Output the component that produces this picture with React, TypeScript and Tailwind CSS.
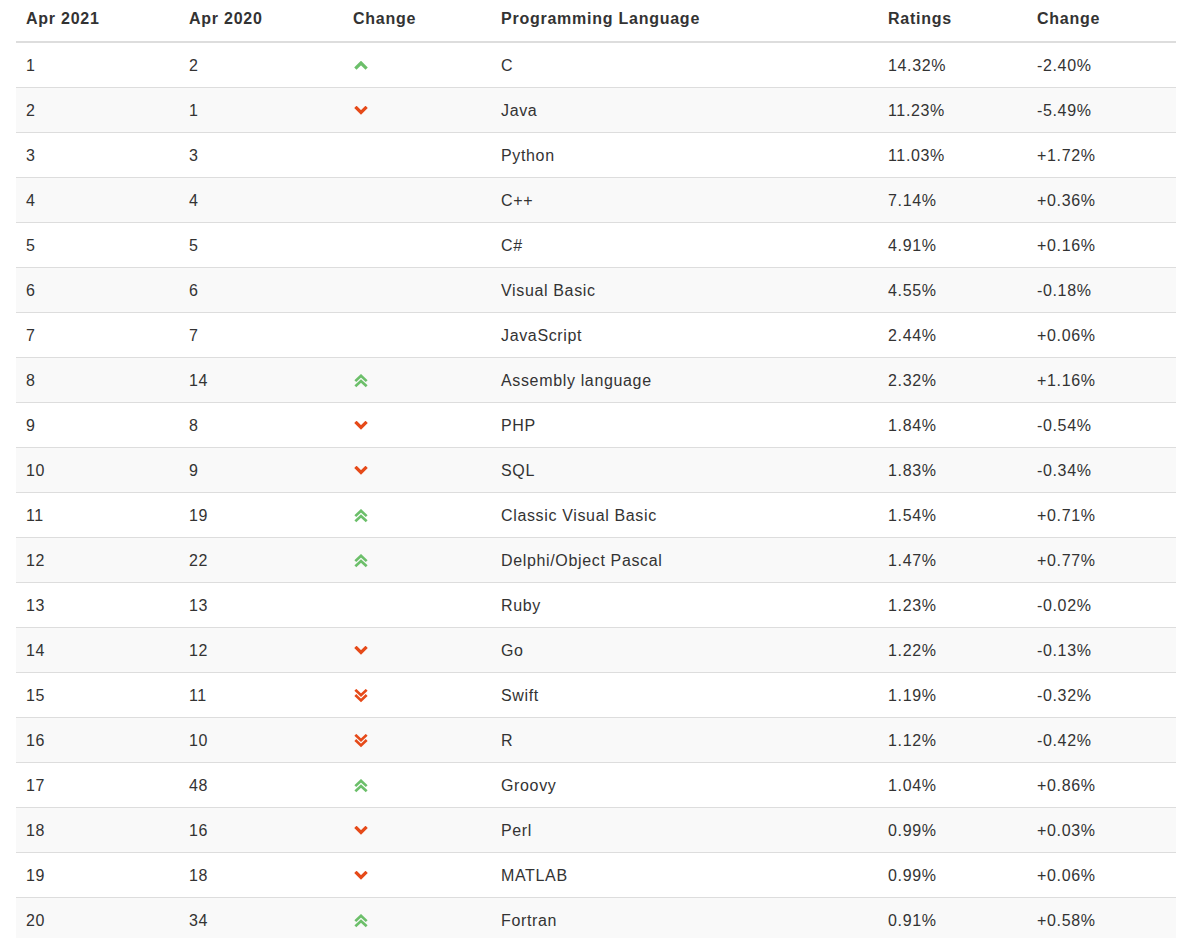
import React from "react";

type Dir = "up" | "down" | "up2" | "down2" | "";

const rows: [number, number, Dir, string, string, string][] = [
  [1, 2, "up", "C", "14.32%", "-2.40%"],
  [2, 1, "down", "Java", "11.23%", "-5.49%"],
  [3, 3, "", "Python", "11.03%", "+1.72%"],
  [4, 4, "", "C++", "7.14%", "+0.36%"],
  [5, 5, "", "C#", "4.91%", "+0.16%"],
  [6, 6, "", "Visual Basic", "4.55%", "-0.18%"],
  [7, 7, "", "JavaScript", "2.44%", "+0.06%"],
  [8, 14, "up2", "Assembly language", "2.32%", "+1.16%"],
  [9, 8, "down", "PHP", "1.84%", "-0.54%"],
  [10, 9, "down", "SQL", "1.83%", "-0.34%"],
  [11, 19, "up2", "Classic Visual Basic", "1.54%", "+0.71%"],
  [12, 22, "up2", "Delphi/Object Pascal", "1.47%", "+0.77%"],
  [13, 13, "", "Ruby", "1.23%", "-0.02%"],
  [14, 12, "down", "Go", "1.22%", "-0.13%"],
  [15, 11, "down2", "Swift", "1.19%", "-0.32%"],
  [16, 10, "down2", "R", "1.12%", "-0.42%"],
  [17, 48, "up2", "Groovy", "1.04%", "+0.86%"],
  [18, 16, "down", "Perl", "0.99%", "+0.03%"],
  [19, 18, "down", "MATLAB", "0.99%", "+0.06%"],
  [20, 34, "up2", "Fortran", "0.91%", "+0.58%"],
];

const GREEN = "#6cbf6a";
const RED = "#e64a19";

function Icon({ d }: { d: Dir }) {
  if (!d) return null;
  const up = d === "up" || d === "up2";
  const color = up ? GREEN : RED;
  const dbl = d === "up2" || d === "down2";
  const sw = dbl ? 2.7 : 3.2;
  const one = (y: number) =>
    dbl
      ? up
        ? `M2.3 ${y + 6.2} L7 ${y + 1.8} L11.7 ${y + 6.2}`
        : `M2.3 ${y + 1.8} L7 ${y + 6.2} L11.7 ${y + 1.8}`
      : up
        ? `M2.5 ${y + 6.5} L7 ${y + 2} L11.5 ${y + 6.5}`
        : `M2.5 ${y + 2} L7 ${y + 6.5} L11.5 ${y + 2}`;
  return (
    <svg width="14" height={dbl ? 14 : 9} viewBox={`0 0 14 ${dbl ? 14 : 9}`} className="block ml-[1px]">
      <path d={one(0)} fill="none" stroke={color} strokeWidth={sw} strokeLinecap="square" strokeLinejoin="miter" />
      {dbl && <path d={one(5.2)} fill="none" stroke={color} strokeWidth={sw} strokeLinecap="square" strokeLinejoin="miter" />}
    </svg>
  );
}

export default function App() {
  const widths = ["w-[163px]", "w-[164px]", "w-[148px]", "w-[387px]", "w-[149px]", "w-[149px]"];
  const heads = ["Apr 2021", "Apr 2020", "Change", "Programming Language", "Ratings", "Change"];
  const td = "h-[45px] px-[10px] pt-[2px] border-t border-[#ddd] align-middle tracking-[0.65px]";
  return (
    <div
      className="bg-white pl-4 w-[1192px] h-[938px] overflow-hidden text-[16px] text-[#333]"
      style={{ fontFamily: '"Liberation Sans", Arial, sans-serif' }}
    >
      <table className="w-[1160px] border-collapse table-fixed">
        <thead>
          <tr>
            {heads.map((h, i) => (
              <th
                key={i}
                className={`${widths[i]} h-[42px] px-[10px] text-left font-bold align-middle border-b-2 border-[#ddd] pb-[3px] tracking-[0.75px]`}
              >
                {h}
              </th>
            ))}
          </tr>
        </thead>
        <tbody>
          {rows.map((r, idx) => (
            <tr key={idx} className={idx % 2 === 1 ? "bg-[#f9f9f9]" : "bg-white"}>
              <td className={td}>{r[0]}</td>
              <td className={td}>{r[1]}</td>
              <td className={td}>
                <Icon d={r[2]} />
              </td>
              <td className={td}>{r[3]}</td>
              <td className={td}>{r[4]}</td>
              <td className={td}>{r[5]}</td>
            </tr>
          ))}
        </tbody>
      </table>
    </div>
  );
}
